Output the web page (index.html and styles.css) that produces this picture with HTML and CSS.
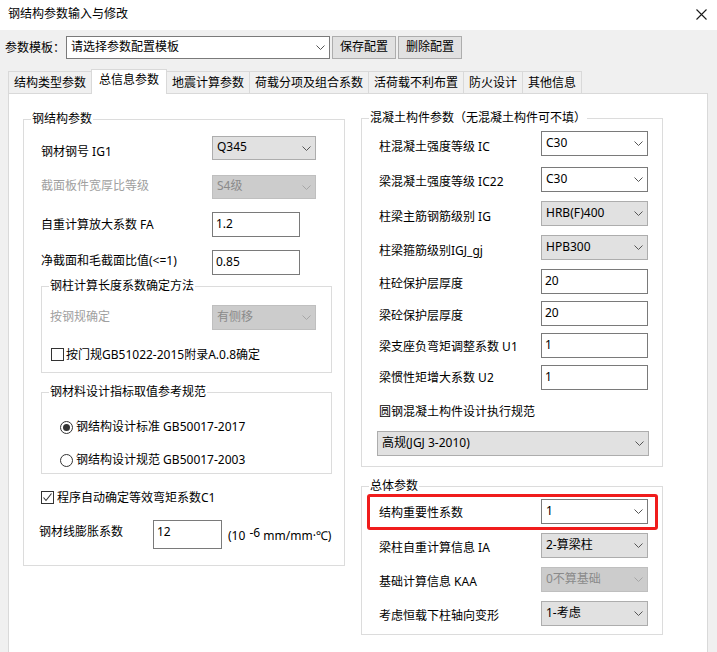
FILE: index.html
```html
<!DOCTYPE html>
<html lang="zh-CN">
<head>
<meta charset="utf-8">
<title>钢结构参数输入与修改</title>
<link rel="stylesheet" href="styles.css">
</head>
<body>
<div class="win">
  <div class="titlebar">
    <span class="title">钢结构参数输入与修改</span>
    <svg class="close" width="11" height="11" viewBox="0 0 11 11"><path d="M0.5 0.5L10.5 10.5M10.5 0.5L0.5 10.5" stroke="#1a1a1a" stroke-width="1.1" fill="none"/></svg>
  </div>

  <div class="toolbar">
    <span class="tlabel">参数模板：</span>
    <div class="sel white combo"><span>请选择参数配置模板</span><svg class="chev" width="9" height="5" viewBox="0 0 9 5"><path d="M0.5 0.5L4.5 4.5L8.5 0.5" fill="none" stroke="#555" stroke-width="1"/></svg></div>
    <div class="btn b-save">保存配置</div>
    <div class="btn b-del">删除配置</div>
  </div>

  <div class="tabs">
    <div class="tab">结构类型参数</div>
    <div class="tab active">总信息参数</div>
    <div class="tab">地震计算参数</div>
    <div class="tab">荷载分项及组合系数</div>
    <div class="tab">活荷载不利布置</div>
    <div class="tab">防火设计</div>
    <div class="tab">其他信息</div>
  </div>

  <div class="panel">
    <div class="col-left">
      <fieldset class="grp g-steel">
        <legend>钢结构参数</legend>
        <div class="row ra">
          <span class="lbl lw171 mt8">钢材钢号 IG1</span>
          <div class="sel gray w104 h24"><span>Q345</span><svg class="chev" width="9" height="5" viewBox="0 0 9 5"><path d="M0.5 0.5L4.5 4.5L8.5 0.5" fill="none" stroke="#555" stroke-width="1"/></svg></div>
        </div>
        <div class="row rb">
          <span class="lbl lw171 mt3 disabled">截面板件宽厚比等级</span>
          <div class="sel dis w104 h24"><span>S4级</span><svg class="chev" width="9" height="5" viewBox="0 0 9 5"><path d="M0.5 0.5L4.5 4.5L8.5 0.5" fill="none" stroke="#a6a6a6" stroke-width="1"/></svg></div>
        </div>
        <div class="row rc">
          <span class="lbl lw171 mt5">自重计算放大系数 FA</span>
          <div class="inp w88 h25">1.2</div>
        </div>
        <div class="row rd">
          <span class="lbl lw171 mt3">净截面和毛截面比值(&lt;=1)</span>
          <div class="inp w88 h25">0.85</div>
        </div>

        <fieldset class="grp sub sub1">
          <legend>钢柱计算长度系数确定方法</legend>
          <div class="row re">
            <span class="lbl lw162 mt4 disabled">按钢规确定</span>
            <div class="sel dis w104 h25"><span>有侧移</span><svg class="chev" width="9" height="5" viewBox="0 0 9 5"><path d="M0.5 0.5L4.5 4.5L8.5 0.5" fill="none" stroke="#a6a6a6" stroke-width="1"/></svg></div>
          </div>
          <div class="row chkrow door">
            <span class="chk"></span>
            <span class="lbl">按门规GB51022-2015附录A.0.8确定</span>
          </div>
        </fieldset>

        <fieldset class="grp sub sub2">
          <legend>钢材料设计指标取值参考规范</legend>
          <div class="row radrow rad1">
            <svg class="radio" width="13" height="13" viewBox="0 0 13 13"><circle cx="6.5" cy="6.5" r="6" fill="#fff" stroke="#333" stroke-width="1"/><circle cx="6.5" cy="6.5" r="3.5" fill="#333"/></svg>
            <span class="lbl">钢结构设计标准 GB50017-2017</span>
          </div>
          <div class="row radrow rad2">
            <svg class="radio" width="13" height="13" viewBox="0 0 13 13"><circle cx="6.5" cy="6.5" r="6" fill="#fff" stroke="#333" stroke-width="1"/></svg>
            <span class="lbl">钢结构设计规范 GB50017-2003</span>
          </div>
        </fieldset>

        <div class="row chkrow c1">
          <svg class="chk-svg" width="13" height="13" viewBox="0 0 13 13"><rect x="0.5" y="0.5" width="12" height="12" fill="#fff" stroke="#333" stroke-width="1"/><path d="M2.5 6.5L5 9.5L10.5 2.5" fill="none" stroke="#333" stroke-width="1.1"/></svg>
          <span class="lbl">程序自动确定等效弯矩系数C1</span>
        </div>

        <div class="row rexp">
          <span class="lbl lw114 mt4">钢材线膨胀系数</span>
          <div class="inp w69 h29">12</div>
          <span class="lbl unit">(10 <sup>-6</sup> mm/mm·℃)</span>
        </div>
      </fieldset>
    </div>

    <div class="col-right">
      <fieldset class="grp g-conc">
        <legend>混凝土构件参数（无混凝土构件可不填）</legend>
        <div class="row h36 first">
          <span class="lbl lw162 mt8">柱混凝土强度等级 IC</span>
          <div class="sel white w107 h25"><span>C30</span><svg class="chev" width="9" height="5" viewBox="0 0 9 5"><path d="M0.5 0.5L4.5 4.5L8.5 0.5" fill="none" stroke="#555" stroke-width="1"/></svg></div>
        </div>
        <div class="row h34">
          <span class="lbl lw162 mt7">梁混凝土强度等级 IC22</span>
          <div class="sel white w107 h25"><span>C30</span><svg class="chev" width="9" height="5" viewBox="0 0 9 5"><path d="M0.5 0.5L4.5 4.5L8.5 0.5" fill="none" stroke="#555" stroke-width="1"/></svg></div>
        </div>
        <div class="row h34">
          <span class="lbl lw162 mt8">柱梁主筋钢筋级别 IG</span>
          <div class="sel gray w107 h25"><span>HRB(F)400</span><svg class="chev" width="9" height="5" viewBox="0 0 9 5"><path d="M0.5 0.5L4.5 4.5L8.5 0.5" fill="none" stroke="#555" stroke-width="1"/></svg></div>
        </div>
        <div class="row h34">
          <span class="lbl lw162 mt8">柱梁箍筋级别IGJ_gj</span>
          <div class="sel gray w107 h25"><span>HPB300</span><svg class="chev" width="9" height="5" viewBox="0 0 9 5"><path d="M0.5 0.5L4.5 4.5L8.5 0.5" fill="none" stroke="#555" stroke-width="1"/></svg></div>
        </div>
        <div class="row h32">
          <span class="lbl lw162 mt7">柱砼保护层厚度</span>
          <div class="inp w107 h25">20</div>
        </div>
        <div class="row h32">
          <span class="lbl lw162 mt7">梁砼保护层厚度</span>
          <div class="inp w107 h25">20</div>
        </div>
        <div class="row h32">
          <span class="lbl lw162 mt6">梁支座负弯矩调整系数 U1</span>
          <div class="inp w107 h25">1</div>
        </div>
        <div class="row h25">
          <span class="lbl lw162 mt5">梁惯性矩增大系数 U2</span>
          <div class="inp w107 h25">1</div>
        </div>
        <div class="row code-lbl">
          <span class="lbl">圆钢混凝土构件设计执行规范</span>
        </div>
        <div class="row code-sel">
          <div class="sel gray w272 h25"><span>高规(JGJ 3-2010)</span><svg class="chev" width="9" height="5" viewBox="0 0 9 5"><path d="M0.5 0.5L4.5 4.5L8.5 0.5" fill="none" stroke="#555" stroke-width="1"/></svg></div>
        </div>
      </fieldset>

      <fieldset class="grp g-total">
        <legend>总体参数</legend>
        <div class="row h34 first hl">
          <span class="lbl lw162 mt6">结构重要性系数</span>
          <div class="sel white w107 h25"><span>1</span><svg class="chev" width="9" height="5" viewBox="0 0 9 5"><path d="M0.5 0.5L4.5 4.5L8.5 0.5" fill="none" stroke="#555" stroke-width="1"/></svg></div>
          <div class="highlight"></div>
        </div>
        <div class="row h34">
          <span class="lbl lw162 mt7">梁柱自重计算信息 IA</span>
          <div class="sel gray w107 h25"><span>2-算梁柱</span><svg class="chev" width="9" height="5" viewBox="0 0 9 5"><path d="M0.5 0.5L4.5 4.5L8.5 0.5" fill="none" stroke="#555" stroke-width="1"/></svg></div>
        </div>
        <div class="row h34">
          <span class="lbl lw162 mt7">基础计算信息 KAA</span>
          <div class="sel dis w107 h25"><span>0不算基础</span><svg class="chev" width="9" height="5" viewBox="0 0 9 5"><path d="M0.5 0.5L4.5 4.5L8.5 0.5" fill="none" stroke="#a6a6a6" stroke-width="1"/></svg></div>
        </div>
        <div class="row h25">
          <span class="lbl lw162 mt7">考虑恒载下柱轴向变形</span>
          <div class="sel gray w107 h25"><span>1-考虑</span><svg class="chev" width="9" height="5" viewBox="0 0 9 5"><path d="M0.5 0.5L4.5 4.5L8.5 0.5" fill="none" stroke="#555" stroke-width="1"/></svg></div>
        </div>
      </fieldset>
    </div>
  </div>
</div>
</body>
</html>
```

FILE: styles.css
```css
* { box-sizing: border-box; }
html, body { margin: 0; padding: 0; }
body {
  width: 717px;
  height: 652px;
  overflow: hidden;
  background: #f0f0f0;
  font-family: "Noto Sans", "Noto Sans CJK SC", sans-serif;
  font-size: 12px;
  line-height: 16px;
  color: #000;
}
.win { width: 717px; height: 652px; overflow: hidden; }

/* title bar */
.titlebar {
  height: 30px;
  background: #fff;
  display: flex;
  align-items: flex-start;
  justify-content: space-between;
  padding: 6px 10px 0 8px;
}
.close { margin-top: 3px; }

/* toolbar */
.toolbar {
  height: 30px;
  display: flex;
  align-items: flex-start;
  padding: 6px 0 0 5px;
}
.tlabel { width: 61px; margin-top: 4px; flex: none; }
.combo { width: 264px; height: 23px; }
.btn {
  height: 23px;
  margin-left: 2px;
  background: #e1e1e1;
  border: 1px solid #adadad;
  display: flex;
  align-items: center;
  justify-content: center;
  padding-bottom: 1px;
}
.b-save { width: 64px; }
.b-del { width: 64px; }

/* tabs */
.tabs {
  height: 33px;
  display: flex;
  align-items: flex-end;
  padding-left: 8px;
  position: relative;
  z-index: 2;
}
.tab {
  height: 22px;
  padding: 3px 5px 0;
  border: 1px solid #d9d9d9;
  border-bottom: none;
  margin-left: -1px;
  background: #f0f0f0;
  white-space: nowrap;
}
.tab:first-child { margin-left: 0; }
.tab.active {
  height: 25px;
  padding: 2px 7px 0;
  background: #fff;
  margin-bottom: -1px;
  position: relative;
  z-index: 3;
}

/* panel */
.panel {
  margin-left: 8px;
  width: 700px;
  height: 620px;
  background: #fff;
  border: 1px solid #d9d9d9;
  display: flex;
  align-items: flex-start;
  position: relative;
  z-index: 1;
}
.col-left { margin-left: 14px; margin-top: 17px; }
.col-right { margin-left: 16px; margin-top: 16px; }

/* group boxes */
.grp {
  margin: 0;
  padding: 0;
  border: 1px solid #dcdcdc;
  min-inline-size: 0;
}
.grp > legend {
  padding: 0 1px;
  line-height: 16px;
  height: 16px;
}
.g-steel { width: 322px; padding: 0 0 16px 17px; }
.g-conc { width: 302px; padding: 0 0 10px 17px; }
.g-total { width: 302px; padding: 0 0 8px 17px; margin-top: 11px; }
.g-steel > legend, .g-conc > legend, .g-total > legend { margin-left: -10px; }
.sub { width: 291px; }
.sub1 { padding: 0 0 11px 8px; }
.sub1 > legend { margin-left: -1px; }
.sub2 { padding: 0 0 5px 18px; margin-top: 11px; }
.sub2 > legend { margin-left: -11px; }

/* rows */
.row { display: flex; align-items: flex-start; }
.lbl { white-space: nowrap; line-height: 16px; flex: none; }
.lw171 { width: 171px; }
.lw162 { width: 162px; }
.lw114 { width: 114px; margin-left: -2px; }
.mt3 { margin-top: 3px; }
.mt4 { margin-top: 4px; }
.mt5 { margin-top: 5px; }
.mt6 { margin-top: 6px; }
.mt7 { margin-top: 7px; }
.mt8 { margin-top: 8px; }
.disabled { color: #a0a0a0; }

.ra { height: 39px; margin-top: 9px; }
.rb { height: 37px; }
.rc { height: 38px; }
.rd { height: 28px; }
.re { margin-top: 11px; height: 25px; }
.door { margin-top: 18px; margin-left: 1px; }
.chkrow { align-items: center; height: 13px; }
.chk {
  width: 13px; height: 13px;
  border: 1px solid #333;
  background: #fff;
  margin-right: 2px;
  flex: none;
}
.chk-svg { margin-right: 3px; flex: none; }
.radrow { align-items: center; height: 16px; }
.radio { margin-right: 3px; flex: none; }
.rad1 { margin-top: 19px; }
.rad2 { margin-top: 17px; }
.c1 { margin-top: 17px; }
.rexp { margin-top: 16px; }
.unit { margin-top: 8px; margin-left: 6px; }
.unit sup { font-size: 12px; line-height: 0; vertical-align: 3px; margin-left: 1px; }

.h36 { height: 36px; }
.h34 { height: 34px; }
.h32 { height: 32px; }
.h25 { height: 25px; }
.first { margin-top: 5px; }
.code-lbl { margin-top: 14px; }
.code-sel { margin-top: 11px; margin-left: -2px; }

/* controls */
.sel {
  display: flex;
  align-items: center;
  justify-content: space-between;
  border: 1px solid #adadad;
  padding: 0 4px 2px 4px;
  flex: none;
  white-space: nowrap;
}
.sel .chev { flex: none; margin-top: 2px; }
.white { background: #fff; border-color: #7a7a7a; }
.gray { background: #e1e1e1; border-color: #adadad; }
.dis { background: #cccccc; border-color: #bfbfbf; color: #8a8a8a; }
.inp {
  background: #fff;
  border: 1px solid #7a7a7a;
  padding: 3px 3px 0;
  flex: none;
}
.w104 { width: 104px; }
.w88 { width: 88px; }
.w69 { width: 69px; }
.w107 { width: 107px; }
.w272 { width: 272px; }
.h24 { height: 24px; }
.h25.sel, .h25.inp { height: 25px; }
.h29 { height: 29px; }

/* highlight overlay */
.hl { position: relative; }
.highlight {
  position: absolute;
  left: -12px;
  top: -5px;
  width: 291px;
  height: 36px;
  border: 3px solid #f01c1c;
  border-radius: 3px;
  pointer-events: none;
}
```
